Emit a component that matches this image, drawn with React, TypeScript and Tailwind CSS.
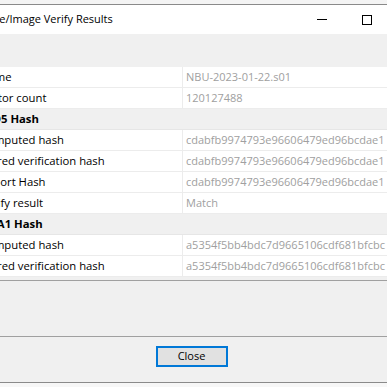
import React from "react";

type Row = { label: string; value?: string; header?: boolean };

const rows: Row[] = [
  { label: "Name", value: "NBU-2023-01-22.s01" },
  { label: "Sector count", value: "120127488" },
  { label: "MD5 Hash", header: true },
  { label: "Computed hash", value: "cdabfb9974793e96606479ed96bcdae1" },
  { label: "Stored verification hash", value: "cdabfb9974793e96606479ed96bcdae1" },
  { label: "Report Hash", value: "cdabfb9974793e96606479ed96bcdae1" },
  { label: "Verify result", value: "Match" },
  { label: "SHA1 Hash", header: true },
  { label: "Computed hash", value: "a5354f5bb4bdc7d9665106cdf681bfcbc" },
  { label: "Stored verification hash", value: "a5354f5bb4bdc7d9665106cdf681bfcbc" },
];

export default function App() {
  return (
    <div
      className="w-[387px] h-[387px] overflow-hidden bg-[#f0f0f0] flex flex-col text-[11px] text-black"
      style={{ fontFamily: '"Open Sans", "Noto Sans", sans-serif' }}
    >
      <div className="h-[4px] bg-[#f4f4f4] shrink-0" />
      <div className="h-[1px] bg-[#8a8a8a] shrink-0" />
      {/* title bar */}
      <div className="h-[29px] bg-white flex items-center shrink-0 relative">
        <span className="ml-[-12px] text-[11px] whitespace-nowrap">File/Image Verify Results</span>
        <div className="ml-auto flex items-center h-full">
          <div className="w-[10px] h-[1px] bg-black mr-[35px]" />
          <div className="w-[10px] h-[10px] border border-black mr-[15px]" />
        </div>
      </div>
      <div className="h-[33px] shrink-0" />
      {/* table */}
      <div className="flex flex-col shrink-0 w-[420px]">
        {rows.map((r, i) =>
          r.header ? (
            <div
              key={i}
              className="h-[21px] bg-[#f0f0f0] border-b border-[#e6e6e6] flex items-center"
            >
              <span className="ml-[-18px] font-bold text-[11.3px] whitespace-nowrap">{r.label}</span>
            </div>
          ) : (
            <div key={i} className="h-[21px] bg-white border-b border-[#ececec] flex">
              <div className="w-[183px] border-r border-[#ececec] flex items-center overflow-hidden">
                <span className="ml-[-20px] text-[11.3px] whitespace-nowrap">{r.label}</span>
              </div>
              <div className="flex-1 flex items-center pl-[3px] text-[#a0a0a0] whitespace-nowrap">
                {r.value}
              </div>
            </div>
          )
        )}
      </div>
      <div className="h-[3px] shrink-0" />
      <div className="h-[1px] bg-[#a0a0a0] shrink-0" />
      <div className="h-[55px] shrink-0" />
      <div className="h-[1px] bg-[#a0a0a0] shrink-0" />
      <div className="h-[45px] shrink-0 flex justify-center pt-[9px]">
        <button className="ml-[-4px] w-[72px] h-[21px] bg-[#e1e1e1] border-2 border-[#0078d7] flex items-center justify-center text-[11px] text-black">
          Close
        </button>
      </div>
      <div className="h-[1px] bg-[#8a8a8a] shrink-0" />
      <div className="flex-1 bg-[#f7f7f7]" />
    </div>
  );
}
